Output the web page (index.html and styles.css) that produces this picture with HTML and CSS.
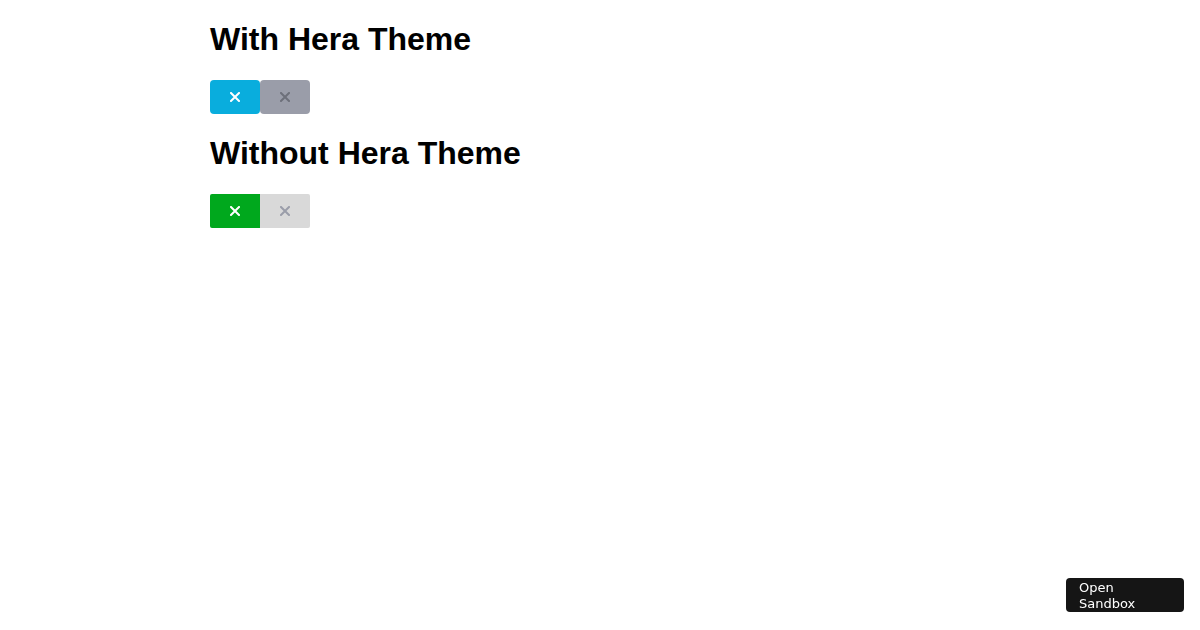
FILE: index.html
```html
<!DOCTYPE html>
<html>
<head>
<meta charset="utf-8">
<link rel="stylesheet" href="styles.css">
</head>
<body>
<main class="page">
  <h1 class="title">With Hera Theme</h1>
  <div class="group hera">
    <button class="btn primary" aria-label="close">
      <svg viewBox="0 0 10 10" width="10" height="10"><path d="M1 1L9 9M9 1L1 9" stroke="currentColor" stroke-width="2" stroke-linecap="square"/></svg>
    </button>
    <button class="btn secondary" aria-label="close">
      <svg viewBox="0 0 10 10" width="10" height="10"><path d="M1 1L9 9M9 1L1 9" stroke="currentColor" stroke-width="2" stroke-linecap="square"/></svg>
    </button>
  </div>
  <h1 class="title second">Without Hera Theme</h1>
  <div class="group plain">
    <button class="btn primary" aria-label="close">
      <svg viewBox="0 0 10 10" width="10" height="10"><path d="M1 1L9 9M9 1L1 9" stroke="currentColor" stroke-width="2" stroke-linecap="square"/></svg>
    </button>
    <button class="btn secondary" aria-label="close">
      <svg viewBox="0 0 10 10" width="10" height="10"><path d="M1 1L9 9M9 1L1 9" stroke="currentColor" stroke-width="2" stroke-linecap="square"/></svg>
    </button>
  </div>
</main>
<a class="sandbox" href="#">Open Sandbox</a>
</body>
</html>
```

FILE: styles.css
```css
html, body {
  margin: 0;
  padding: 0;
  background: #ffffff;
}
body {
  font-family: "Liberation Sans", Arial, sans-serif;
  width: 1200px;
  height: 630px;
  overflow: hidden;
}
.page {
  padding: 21px 0 0 210px;
  display: flex;
  flex-direction: column;
  align-items: flex-start;
}
.title {
  margin: 0;
  font-size: 32px;
  line-height: 37px;
  font-weight: bold;
  color: #000;
}
.second {
  margin-top: 21px;
}
.group {
  display: flex;
  margin-top: 22px;
}
.btn {
  width: 50px;
  height: 34px;
  border: 0;
  padding: 0;
  margin: 0;
  display: flex;
  align-items: center;
  justify-content: center;
  cursor: pointer;
}
.btn svg {
  display: block;
}
.hera .btn {
  border-radius: 4px;
}
.hera .primary {
  background: #09addd;
  color: #ffffff;
}
.hera .secondary {
  background: #9a9da9;
  color: #6d707a;
}
.plain .primary {
  background: #00a81d;
  color: #ffffff;
  border-radius: 2px 0 0 2px;
}
.plain .secondary {
  background: #d9d9d9;
  color: #9a9da9;
  border-radius: 0 2px 2px 0;
}
.sandbox {
  position: fixed;
  right: 16px;
  bottom: 18px;
  width: 118px;
  height: 34px;
  box-sizing: border-box;
  padding: 2px 13px 0;
  background: #151515;
  border-radius: 4px;
  color: #ffffff;
  text-decoration: none;
  font-family: "DejaVu Sans", sans-serif;
  font-size: 13px;
  line-height: 16px;
  word-spacing: 60px;
}
```
